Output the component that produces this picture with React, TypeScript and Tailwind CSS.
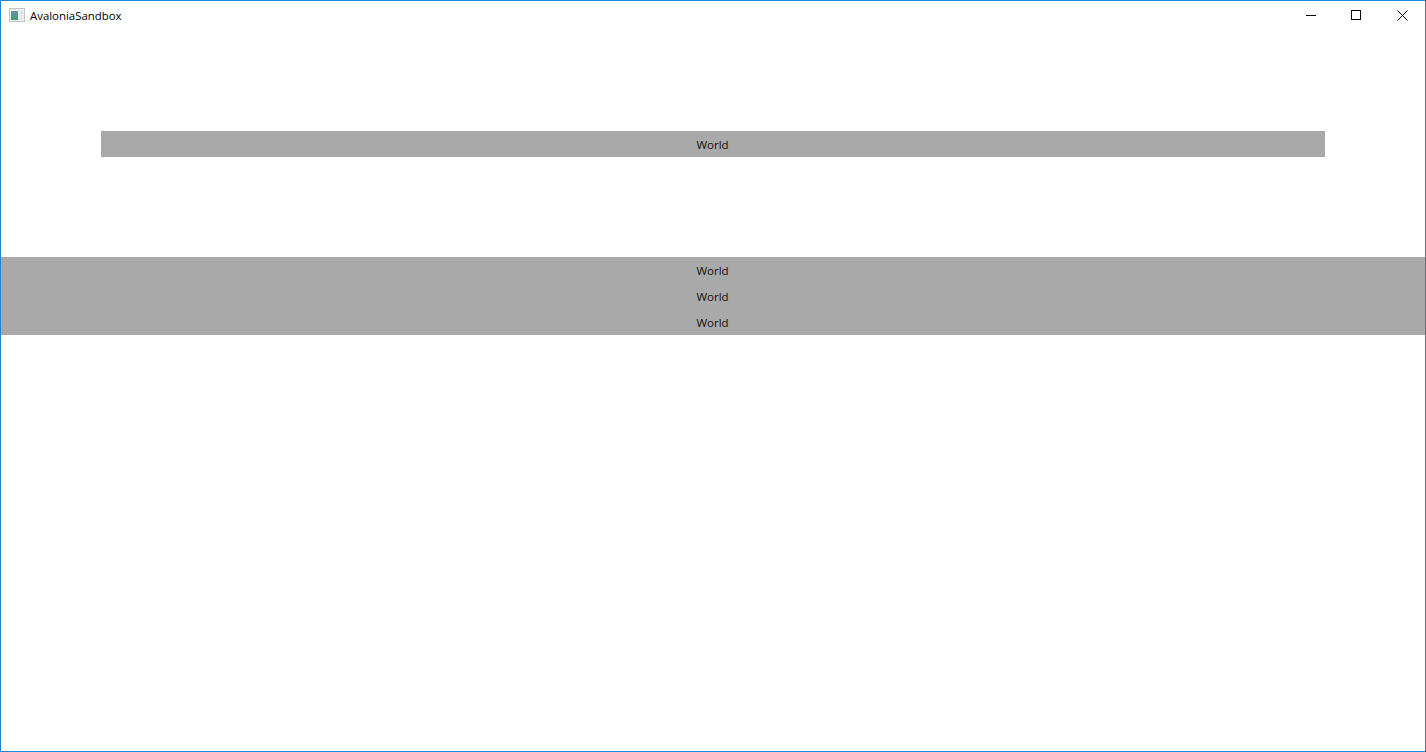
const WORLD_ROWS = [0, 1, 2];

function AppIcon() {
  return (
    <svg width="16" height="14" viewBox="0 0 16 14" className="mb-[2px] shrink-0">
      <defs>
        <linearGradient id="pane" x1="0" y1="0" x2="0" y2="1">
          <stop offset="0" stopColor="#6f93ad" />
          <stop offset="1" stopColor="#3f9a78" />
        </linearGradient>
      </defs>
      <rect x="0.5" y="0.5" width="15" height="13" fill="#f0f0f0" stroke="#c4c4c4" />
      <rect x="2" y="3" width="7" height="9" fill="url(#pane)" />
      <rect x="11" y="3" width="3" height="3" fill="#cfe6dc" />
      <rect x="11" y="7" width="3" height="5" fill="#e6e6e6" />
    </svg>
  );
}

function WindowButtons() {
  return (
    <div className="flex h-full items-center pb-[2px]">
      <div className="flex h-full w-[45px] items-center justify-center">
        <svg width="10" height="10" viewBox="0 0 10 10">
          <path d="M0 5.5H10" stroke="#000" fill="none" />
        </svg>
      </div>
      <div className="flex h-full w-[45px] items-center justify-center">
        <svg width="10" height="10" viewBox="0 0 10 10">
          <rect x="0.5" y="0.5" width="9" height="9" stroke="#000" fill="none" />
        </svg>
      </div>
      <div className="flex h-full w-[47px] items-center justify-center pl-[2px]">
        <svg width="11" height="11" viewBox="0 0 11 11">
          <path d="M0.5 0.5L10.5 10.5M10.5 0.5L0.5 10.5" stroke="#000" fill="none" />
        </svg>
      </div>
    </div>
  );
}

function Row() {
  return (
    <div className="flex h-[26px] items-center justify-center pt-[1px] pr-[1px] text-[11.5px] text-[#111]">
      World
    </div>
  );
}

export default function App() {
  return (
    <div className="flex h-[752px] flex-col border border-[#1a86d9] bg-white font-['Open_Sans','Noto_Sans',sans-serif]">
      {/* Title bar */}
      <div className="flex h-[30px] items-center justify-between">
        <div className="flex items-center gap-[5px] pl-[8px] text-[11.4px] text-black">
          <AppIcon />
          <span>AvaloniaSandbox</span>
        </div>
        <WindowButtons />
      </div>

      {/* Content */}
      <div className="flex flex-1 flex-col">
        <div className="mx-[100px] my-[100px] bg-[#a9a9a9]">
          <Row />
        </div>
        <div className="bg-[#a9a9a9]">
          {WORLD_ROWS.map((i) => (
            <Row key={i} />
          ))}
        </div>
      </div>
    </div>
  );
}
